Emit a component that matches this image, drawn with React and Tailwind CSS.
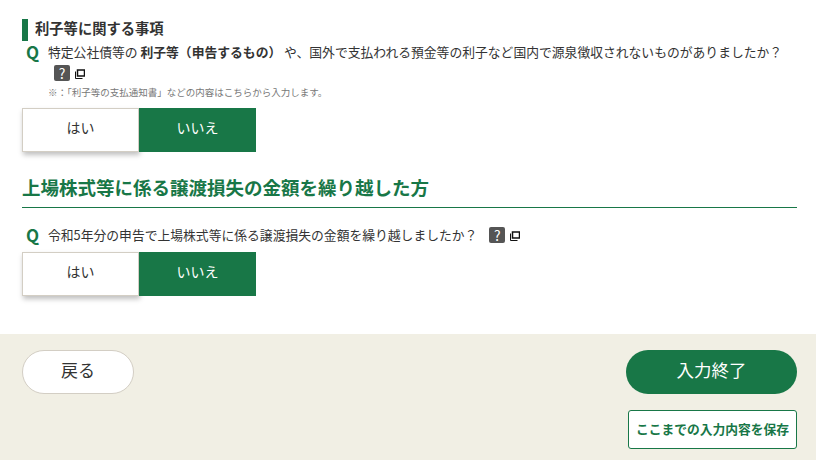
import React from 'react';

const jp = "font-['Noto_Sans_CJK_JP','Noto_Sans',sans-serif]";

// Help badge plus the "opens in new window" mark
const HelpIcons = ({ className = '' }) => (
    <span className={`items-center gap-[5px] ${className}`}>
        <span className="flex h-4 w-4 items-center justify-center rounded-[2px] bg-[#555] text-[14px] leading-none text-white">?</span>
        <svg width="10" height="10" viewBox="0 0 10 10" fill="none" stroke="#111" className="mt-[1px]">
            <rect x="2.5" y="1" width="7" height="6" strokeWidth="1.5" />
            <path d="M0.5 2.5V9.5H7.5" strokeWidth="1" />
        </svg>
    </span>
);

const YesNo = () => (
    <div className="flex h-11 w-[234px] text-[14px]">
        <div className="flex h-11 w-[117px] items-center justify-center border border-[#d3cec4] bg-white pb-[5px] text-[#333] shadow-[1px_3px_5px_rgba(0,0,0,0.25)]">はい</div>
        <div className="flex h-11 w-[117px] items-center justify-center bg-[#187747] pb-[5px] text-white">いいえ</div>
    </div>
);

export default function App() {
    return (
        <div className={`${jp} flex h-[460px] w-[816px] flex-col overflow-hidden bg-white text-[#333]`}>
            <main className="h-[334px] pt-[19px] pr-[19px] pl-[22px]">
                <div className="flex h-[22px] items-center border-l-[6px] border-[#187747] pb-[3px] pl-[7px] text-[14.3px] leading-none font-bold">利子等に関する事項</div>

                <div className="flex">
                    <span className="ml-1 w-[22px] text-[17px] leading-[22px] font-bold text-[#187747]">Q</span>
                    <div>
                        <p className="h-[22px] text-[12.8px] leading-[22px]">特定公社債等の <b>利子等&#xFF08;申告するもの&#xFF09;</b> や、国外で支払われる預金等の利子など国内で源泉徴収されないものがありましたか&#xFF1F;</p>
                        <HelpIcons className="mt-[2px] ml-[6px] flex" />
                    </div>
                </div>
                <p className="mt-1 ml-[26px] text-[9.5px] leading-[14px] text-[#777]">※&#xFF1A;「利子等の支払通知書」などの内容はこちらから入力します。</p>
                <div className="mt-[9px]"><YesNo /></div>

                <h2 className="mt-[21px] border-b border-[#187747] pb-[6px] text-[18.5px] leading-[28px] font-bold text-[#187747]">上場株式等に係る譲渡損失の金額を繰り越した方</h2>

                <div className="mt-[15px] flex h-6 items-center">
                    <span className="ml-1 w-[22px] text-[17px] font-bold text-[#187747]">Q</span>
                    <span className="text-[12.8px]">令和5年分の申告で上場株式等に係る譲渡損失の金額を繰り越しましたか&#xFF1F;</span>
                    <HelpIcons className="ml-[12px] flex" />
                </div>
                <div className="mt-[5px]"><YesNo /></div>
            </main>

            <footer className="flex flex-1 items-start justify-between bg-[#f1efe4] pt-4 pr-[19px] pl-[22px]">
                <button className="flex h-11 w-[112px] items-center justify-center rounded-full border border-[#d3cec4] bg-white pb-1 text-[17px]">戻る</button>
                <div className="flex flex-col items-end gap-4">
                    <button className="flex h-11 w-[171px] items-center justify-center rounded-full bg-[#187747] pb-[3px] text-[17.5px] text-white">入力終了</button>
                    <button className="flex h-[39px] w-[169px] items-center justify-center rounded-[3px] border border-[#187747] bg-white pb-[2px] text-[12.75px] font-bold text-[#187747]">ここまでの入力内容を保存</button>
                </div>
            </footer>
        </div>
    );
}
